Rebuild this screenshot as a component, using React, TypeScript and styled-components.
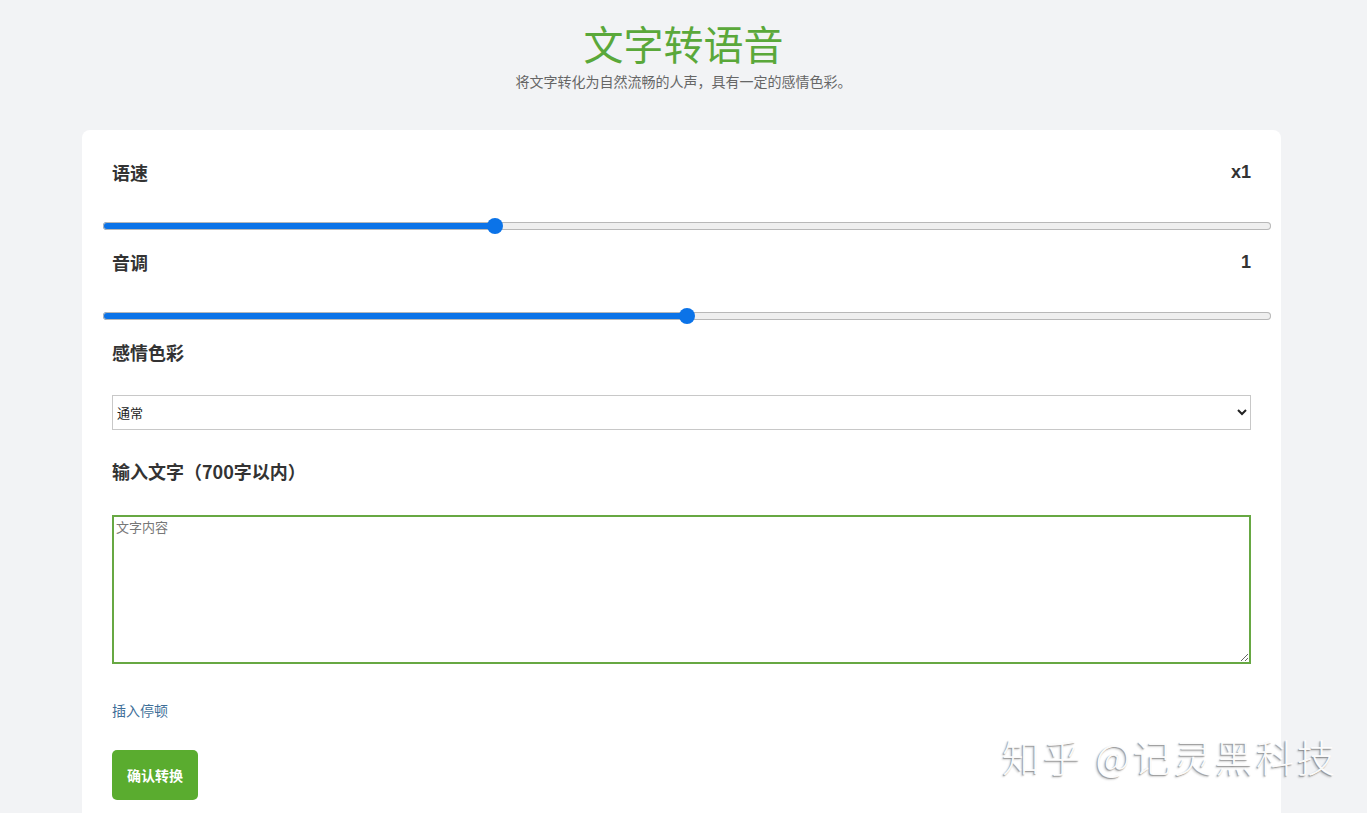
import React, { useState } from 'react';
import styled, { createGlobalStyle } from 'styled-components';

const GlobalStyle = createGlobalStyle`
  * {
    margin: 0;
    padding: 0;
    box-sizing: border-box;
  }

  body {
    font-family: 'Noto Sans CJK SC', 'Noto Sans', sans-serif;
    background-color: #f2f3f5;
    color: #333;
  }
`;

const emotions = ['通常', '高兴', '悲伤', '生气', '温柔'];

const App: React.FC = () => {
  const [speed, setSpeed] = useState(1);
  const [pitch, setPitch] = useState(1);
  const [emotion, setEmotion] = useState('通常');
  const [text, setText] = useState('');

  const speedPct = ((speed - 0.5) / 1.5) * 100;
  const pitchPct = (pitch / 2) * 100;

  return (
    <>
      <GlobalStyle />
      <Page>
        <Header>
          <Title>文字转语音</Title>
          <Subtitle>将文字转化为自然流畅的人声，具有一定的感情色彩。</Subtitle>
        </Header>

        <Card>
          <LabelRow>
            <Label>语速</Label>
            <Value>x{speed}</Value>
          </LabelRow>
          <Slider
            type="range"
            min={0.5}
            max={2}
            step={0.1}
            value={speed}
            onChange={(e) => setSpeed(Number(e.target.value))}
            style={{ '--pct': `${speedPct}%` } as React.CSSProperties}
          />

          <LabelRow>
            <Label>音调</Label>
            <Value>{pitch}</Value>
          </LabelRow>
          <Slider
            type="range"
            min={0}
            max={2}
            step={0.1}
            value={pitch}
            onChange={(e) => setPitch(Number(e.target.value))}
            style={{ '--pct': `${pitchPct}%` } as React.CSSProperties}
          />

          <LabelRow>
            <Label>感情色彩</Label>
          </LabelRow>
          <Select value={emotion} onChange={(e) => setEmotion(e.target.value)}>
            {emotions.map((em) => (
              <option key={em} value={em}>{em}</option>
            ))}
          </Select>

          <LabelRow $gap={25}>
            <Label>输入文字（700字以内）</Label>
          </LabelRow>
          <TextArea
            placeholder="文字内容"
            maxLength={700}
            value={text}
            onChange={(e) => setText(e.target.value)}
          />

          <PauseLink href="#">插入停顿</PauseLink>

          <ConvertButton type="button">确认转换</ConvertButton>
        </Card>

        <Watermark>知乎 @记灵黑科技</Watermark>
      </Page>
    </>
  );
};

// Styled Components
const Page = styled.div`
  position: relative;
  min-height: 100vh;
  overflow: hidden;
`;

const Header = styled.header`
  display: flex;
  flex-direction: column;
  align-items: center;
  padding-top: 19px;
`;

const Title = styled.h1`
  font-size: 40px;
  line-height: 48px;
  font-weight: 400;
  color: #5aa83a;
`;

const Subtitle = styled.p`
  font-size: 14px;
  line-height: 20px;
  color: #666;
  margin-top: 4px;
`;

const Card = styled.main`
  width: 1199px;
  margin: 39px 0 0 82px;
  background: #fff;
  border-radius: 8px;
  padding: 26px 30px 30px;
  display: flex;
  flex-direction: column;
  min-height: 700px;
`;

const LabelRow = styled.div<{ $gap?: number }>`
  display: flex;
  justify-content: space-between;
  align-items: center;
  height: 32px;
  margin-top: ${({ $gap }) => $gap ?? 12}px;

  &:first-child {
    margin-top: 0;
  }
`;

const Label = styled.span`
  font-size: 18px;
  font-weight: 700;
  color: #333;
`;

const Value = styled.span`
  font-family: 'Liberation Sans', 'Noto Sans', sans-serif;
  font-size: 18px;
  font-weight: 700;
  color: #333;
`;

const Slider = styled.input`
  -webkit-appearance: none;
  appearance: none;
  width: calc(100% + 29px);
  margin: 30px 0 0 -9px;
  height: 16px;
  background: transparent;
  cursor: pointer;

  &::-webkit-slider-runnable-track {
    height: 8px;
    border-radius: 4px;
    background: linear-gradient(
      to right,
      #0b73e8 0%,
      #0b73e8 var(--pct),
      #efefef var(--pct),
      #efefef 100%
    );
    box-shadow: inset 0 0 0 1px #b8b8b8;
  }

  &::-webkit-slider-thumb {
    -webkit-appearance: none;
    width: 16px;
    height: 16px;
    margin-top: -4px;
    border-radius: 50%;
    background: #0b73e8;
    border: none;
  }
`;

const Select = styled.select`
  margin-top: 27px;
  height: 35px;
  width: 100%;
  border: 1px solid #c8c8c8;
  border-radius: 0;
  background: #fff;
  padding: 0;
  font-family: 'Noto Sans CJK SC', sans-serif;
  font-size: 13px;
  color: #222;
  outline: none;
`;

const TextArea = styled.textarea`
  margin-top: 28px;
  height: 149px;
  width: 100%;
  border: 2px solid #67a843;
  padding: 0 2px;
  font-family: 'Noto Sans CJK SC', sans-serif;
  font-size: 13px;
  color: #333;
  outline: none;

  &::placeholder {
    color: #777;
  }
`;

const PauseLink = styled.a`
  align-self: flex-start;
  margin-top: 36px;
  font-size: 14px;
  line-height: 20px;
  color: #3f6f99;
  text-decoration: none;
`;

const ConvertButton = styled.button`
  align-self: flex-start;
  margin-top: 30px;
  width: 86px;
  height: 50px;
  border: none;
  border-radius: 5px;
  background: #5aac2f;
  color: #fff;
  font-family: 'Noto Sans CJK SC', sans-serif;
  font-size: 14px;
  font-weight: 700;
  cursor: pointer;
`;

const Watermark = styled.div`
  position: absolute;
  left: 1002px;
  top: 731px;
  font-size: 38px;
  line-height: 50px;
  letter-spacing: 3px;
  font-weight: 300;
  white-space: nowrap;
  color: rgba(255, 255, 255, 0.95);
  text-shadow: -1px 1px 1px rgba(0, 0, 0, 0.35), -2px 2px 2px rgba(0, 0, 0, 0.15);
  pointer-events: none;
`;

export default App;
